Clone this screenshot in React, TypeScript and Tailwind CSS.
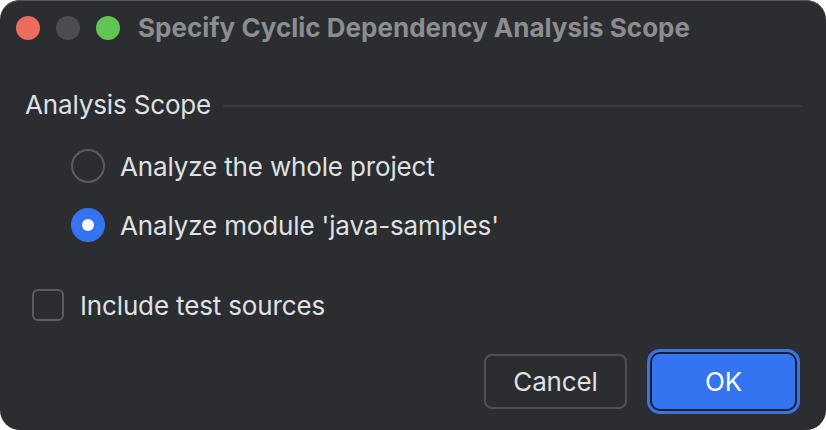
import React from "react";

export default function App() {
  return (
    <div className="w-[826px] h-[430px] bg-white" style={{ fontFamily: "Inter, 'Noto Sans', sans-serif" }}>
      <div className="w-[826px] h-[430px] rounded-[20px] bg-[#2b2d30] shadow-[inset_0_1px_0_#55575c] flex flex-col overflow-hidden tracking-[-0.15px]">
        {/* Title bar */}
        <div className="h-[56px] flex items-center pl-[16px] shrink-0">
          <div className="w-[24px] h-[24px] rounded-full bg-[#ed6a5e]" />
          <div className="w-[24px] h-[24px] rounded-full bg-[#4c4d50] ml-[16px]" />
          <div className="w-[24px] h-[24px] rounded-full bg-[#61c554] ml-[16px]" />
          <div className="ml-[18px] text-[26px] font-bold text-[#8c8d90] leading-none tracking-[0px]">
            Specify Cyclic Dependency Analysis Scope
          </div>
        </div>

        {/* Group title */}
        <div className="flex items-center mt-[34px] pl-[25px] pr-[24px]">
          <span className="text-[26px] text-[#dfe1e5] leading-[30px]">Analysis Scope</span>
          <div className="flex-1 h-[2px] bg-[#393b40] ml-[12px] mt-[2px]" />
        </div>

        {/* Radios */}
        <div className="flex flex-col pl-[71px] mt-[29px] gap-[25px]">
          <div className="flex items-center h-[34px]">
            <div className="w-[34px] h-[34px] rounded-full border-2 border-[#5a5d63]" />
            <span className="ml-[15px] text-[26px] text-[#dfe1e5]">Analyze the whole project</span>
          </div>
          <div className="flex items-center h-[34px]">
            <div className="w-[34px] h-[34px] rounded-full bg-[#3574f0] flex items-center justify-center">
              <div className="w-[12px] h-[12px] rounded-full bg-white" />
            </div>
            <span className="ml-[15px] text-[26px] text-[#dfe1e5]">Analyze module 'java-samples'</span>
          </div>
        </div>

        {/* Checkbox */}
        <div className="flex items-center pl-[32px] mt-[47px] h-[32px]">
          <div className="w-[32px] h-[32px] rounded-[6px] border-2 border-[#5a5d63]" />
          <span className="ml-[16px] text-[26px] text-[#dfe1e5]">Include test sources</span>
        </div>

        {/* Buttons */}
        <div className="flex justify-end pr-[31px] mt-[33px] gap-[25px]">
          <button className="w-[143px] h-[55px] rounded-[8px] border-2 border-[#4e5157] text-[26px] text-[#dfe1e5]">
            Cancel
          </button>
          <button className="w-[143px] h-[55px] rounded-[8px] bg-[#3574f0] text-[26px] text-white shadow-[0_0_0_2px_#1e1f22,0_0_0_5px_#3574f0]">
            OK
          </button>
        </div>
      </div>
    </div>
  );
}
